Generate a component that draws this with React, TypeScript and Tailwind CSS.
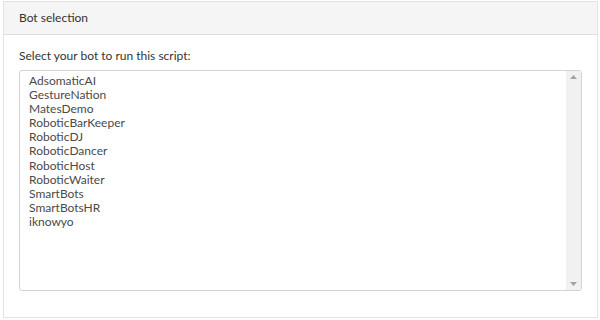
const bots = [
  "AdsomaticAI",
  "GestureNation",
  "MatesDemo",
  "RoboticBarKeeper",
  "RoboticDJ",
  "RoboticDancer",
  "RoboticHost",
  "RoboticWaiter",
  "SmartBots",
  "SmartBotsHR",
  "iknowyo",
];

const App = () => {
  return (
    <div
      className="w-[600px] h-[320px] bg-white pt-[1px] pl-[3px] pr-[2px] pb-[2px]"
      style={{ fontFamily: "Lato, 'Open Sans', sans-serif" }}
    >
      <div className="h-full border border-[#e3e3e3] flex flex-col">
        <div className="h-[33px] bg-[#f5f5f5] border-b border-[#dedede] px-[15px] flex items-center text-[12px] text-[#333]">
          Bot selection
        </div>
        <div className="flex-1 px-[15px] pt-[13px] pb-[26px] flex flex-col">
          <label className="text-[12px] text-[#333] leading-[16px] mb-[6px]">
            Select your bot to run this script:
          </label>
          <div className="flex-1 flex border border-[#d4d4d8] rounded-[3px] overflow-hidden">
            <ul className="flex-1 pt-[3px] pl-[9px] text-[12px] leading-[14.1px] text-[#4a4a4a]">
              {bots.map((b) => (
                <li key={b}>{b}</li>
              ))}
            </ul>
            <div className="w-[15px] bg-[#f1f1f1] flex flex-col justify-between items-center py-[4px]">
              <svg width="7" height="4" viewBox="0 0 7 4">
                <path d="M3.5 0 L7 4 L0 4 Z" fill="#a3a3a3" />
              </svg>
              <svg width="7" height="4" viewBox="0 0 7 4">
                <path d="M0 0 L7 0 L3.5 4 Z" fill="#a3a3a3" />
              </svg>
            </div>
          </div>
        </div>
      </div>
    </div>
  );
};

export default App;
